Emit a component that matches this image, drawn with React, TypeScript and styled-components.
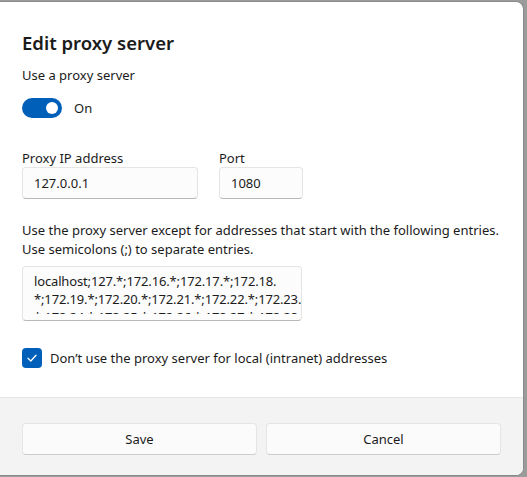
import styled, { createGlobalStyle } from "styled-components";

const GlobalStyle = createGlobalStyle`
  html, body {
    margin: 0;
    padding: 0;
    background-color: #9b9b9b;
  }

  body {
    font-family: "Segoe UI", "Noto Sans", "Open Sans", sans-serif;
    color: #1b1b1b;
    overflow: hidden;
  }
`;

const Page = styled.div`
  width: 527px;
  height: 477px;
  padding-top: 1px;
  box-sizing: border-box;
  overflow: hidden;
`;

const Dialog = styled.div`
  margin-left: -9px;
  width: 533px;
  height: 475px;
  box-sizing: border-box;
  background-color: #ffffff;
  border: 1px solid #8a8a8a;
  border-left: none;
  border-radius: 8px;
  overflow: hidden;
  display: flex;
  flex-direction: column;
`;

const Content = styled.div`
  flex: 1;
  padding: 27px 22px 0 31px;
  display: flex;
  flex-direction: column;
`;

const Title = styled.h1`
  margin: 0;
  font-size: 18.5px;
  line-height: 28px;
  font-weight: 600;
`;

const Text = styled.p<{ $top?: number }>`
  margin: ${(p) => p.$top ?? 0}px 0 0;
  font-size: 13px;
  line-height: 18px;
`;

const Paragraph = styled(Text)`
  line-height: 19px;
`;

const ToggleRow = styled.label`
  margin-top: 14px;
  display: flex;
  align-items: center;
  gap: 12px;
  font-size: 13px;
  line-height: 20px;
`;

const Track = styled.span<{ $on: boolean }>`
  width: 40px;
  height: 20px;
  border-radius: 10px;
  box-sizing: border-box;
  background-color: ${(p) => (p.$on ? "#005fb8" : "#ffffff")};
  display: flex;
  align-items: center;
  justify-content: ${(p) => (p.$on ? "flex-end" : "flex-start")};
  padding: 0 4px;
`;

const Knob = styled.span`
  width: 12px;
  height: 12px;
  border-radius: 50%;
  background-color: #ffffff;
`;

const FieldRow = styled.div`
  margin-top: 31px;
  display: flex;
  gap: 21px;
`;

const Field = styled.div`
  display: flex;
  flex-direction: column;
`;

const FieldLabel = styled.span`
  font-size: 13px;
  line-height: 18px;
`;

const Input = styled.input<{ $width: number }>`
  width: ${(p) => p.$width}px;
  height: 32px;
  box-sizing: border-box;
  padding: 0 11px;
  font-family: inherit;
  font-size: 13px;
  color: #1b1b1b;
  background-color: #fcfcfc;
  border: 1px solid #e5e5e5;
  border-bottom-color: #b8b8b8;
  border-radius: 4px;
  outline: none;
`;

const ListBox = styled.div`
  margin-top: 7px;
  width: 280px;
  height: 55px;
  box-sizing: border-box;
  padding: 5px 0 0 11px;
  background-color: #fcfcfc;
  border: 1px solid #e5e5e5;
  border-bottom-color: #b8b8b8;
  border-radius: 4px;
  font-size: 13px;
  line-height: 18px;
  letter-spacing: -0.15px;
`;

const ListViewport = styled.div`
  height: 42px;
  overflow: hidden;
`;

const ListLine = styled.div`
  white-space: nowrap;
`;

const CheckRow = styled.label`
  margin-top: 27px;
  display: flex;
  align-items: center;
  gap: 8px;
  font-size: 13px;
  line-height: 20px;
`;

const CheckBox = styled.span`
  width: 20px;
  height: 20px;
  border-radius: 4px;
  background-color: #005fb8;
  display: flex;
  align-items: center;
  justify-content: center;
`;

const Footer = styled.div`
  height: 78px;
  box-sizing: border-box;
  background-color: #f3f3f3;
  border-top: 1px solid #e5e5e5;
  padding: 25px 22px 0 31px;
  display: grid;
  grid-template-columns: 1fr 1fr;
  gap: 9px;
  align-content: start;
`;

const Button = styled.button`
  height: 32px;
  font-family: inherit;
  font-size: 13px;
  color: #1b1b1b;
  background-color: #fbfbfb;
  border: 1px solid #e5e5e5;
  border-bottom-color: #cccccc;
  border-radius: 4px;
`;

const exceptions = [
  "localhost;127.*;172.16.*;172.17.*;172.18.",
  "*;172.19.*;172.20.*;172.21.*;172.22.*;172.23.",
  "*;172.24.*;172.25.*;172.26.*;172.27.*;172.28.",
];

export default function App() {
  return (
    <>
      <GlobalStyle />
      <Page>
        <Dialog>
          <Content>
            <Title>Edit proxy server</Title>
            <Text $top={9}>Use a proxy server</Text>
            <ToggleRow>
              <Track $on>
                <Knob />
              </Track>
              On
            </ToggleRow>

            <FieldRow>
              <Field>
                <FieldLabel>Proxy IP address</FieldLabel>
                <Input $width={176} defaultValue="127.0.0.1" />
              </Field>
              <Field>
                <FieldLabel>Port</FieldLabel>
                <Input $width={84} defaultValue="1080" />
              </Field>
            </FieldRow>

            <Paragraph $top={22}>
              Use the proxy server except for addresses that start with the following entries.
              <br />
              Use semicolons (;) to separate entries.
            </Paragraph>
            <ListBox>
              <ListViewport>
                {exceptions.map((line) => (
                  <ListLine key={line}>{line}</ListLine>
                ))}
              </ListViewport>
            </ListBox>

            <CheckRow>
              <CheckBox>
                <svg width="12" height="12" viewBox="0 0 12 12" fill="none">
                  <path d="M2 6.3 4.8 9 10 3.2" stroke="#ffffff" strokeWidth="1.3" strokeLinecap="round" strokeLinejoin="round" />
                </svg>
              </CheckBox>
              Don’t use the proxy server for local (intranet) addresses
            </CheckRow>
          </Content>

          <Footer>
            <Button>Save</Button>
            <Button>Cancel</Button>
          </Footer>
        </Dialog>
      </Page>
    </>
  );
}
